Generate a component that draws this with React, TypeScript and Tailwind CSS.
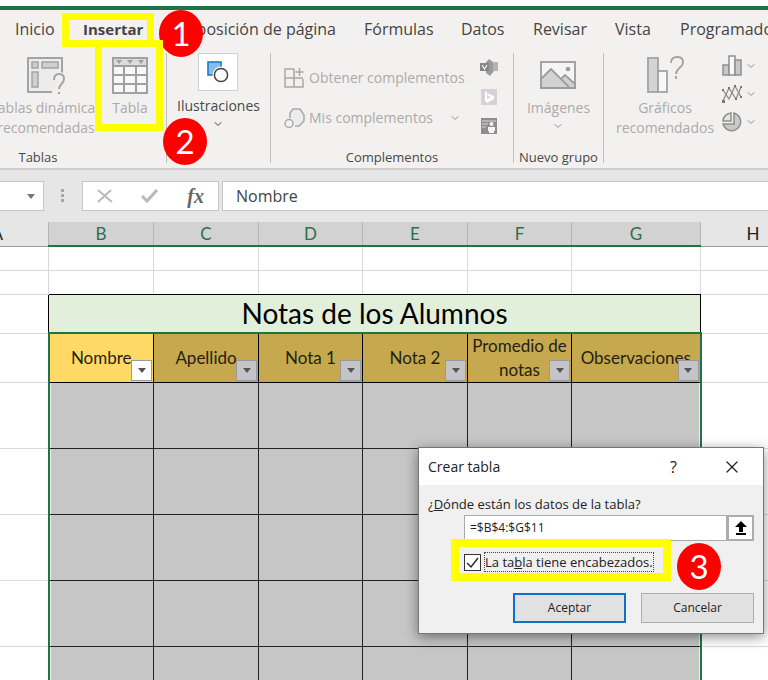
import React, { useState } from 'react';
import { ChevronDown, X } from 'lucide-react';

const tabs = [
  { label: 'Inicio', width: 'w-[68px]' },
  { label: 'Insertar', width: 'w-[86px]', active: true },
  { label: 'Disposición de página', width: 'w-[195px]', alignEnd: true },
  { label: 'Fórmulas', width: 'w-[97px]' },
  { label: 'Datos', width: 'w-[72px]' },
  { label: 'Revisar', width: 'w-[82px]' },
  { label: 'Vista', width: 'w-[65px]' },
  { label: 'Programador', width: 'w-[120px]' },
];

const columns = [
  { letter: 'A', width: 'w-[102px]' },
  { letter: 'B', width: 'w-[105px]', selected: true },
  { letter: 'C', width: 'w-[105px]', selected: true },
  { letter: 'D', width: 'w-[104px]', selected: true },
  { letter: 'E', width: 'w-[105px]', selected: true },
  { letter: 'F', width: 'w-[104px]', selected: true },
  { letter: 'G', width: 'w-[129px]', selected: true },
  { letter: 'H', width: '' },
];

const headers = ['Nombre', 'Apellido', 'Nota 1', 'Nota 2', 'Promedio de notas', 'Observaciones'];

const PivotIcon = () => (
  <svg width="40" height="40" viewBox="0 0 40 40" fill="none" stroke="#a3a3a3" strokeWidth="2">
    <path d="M26 36H2V2h34v16" fill="#ececec" />
    <rect x="6" y="6" width="6" height="6" fill="#d0d0d0" strokeWidth="1.5" />
    <rect x="16" y="6" width="16" height="6" fill="#d0d0d0" strokeWidth="1.5" />
    <rect x="6" y="16" width="6" height="15" fill="#d0d0d0" strokeWidth="1.5" />
    <path d="M28 25c0-4 2-6 5-6s5 2 5 5c0 5-5 5-5 13" stroke="#f3f1f0" strokeWidth="6" />
    <path d="M28 24c0-4 2-6 5-6s5 2 5 5c0 5-5 5-5 10" />
    <path d="M33 36v2" />
  </svg>
);

const TableIcon = () => (
  <svg width="36" height="38" viewBox="0 0 36 38" fill="none" stroke="#a0a0a0" strokeWidth="2">
    <rect x="1" y="1" width="34" height="35" fill="#f7f7f7" />
    <rect x="1" y="1" width="34" height="8" fill="#dcdcdc" stroke="none" />
    <path d="M1 9h34M1 18h34M1 27h34M12 9v27M24 9v27M1 1h34v35H1z" />
    <path d="M4 3h6l-3 4zM15 3h6l-3 4zM26 3h6l-3 4z" fill="#a0a0a0" stroke="none" />
  </svg>
);

const ShapesIcon = () => (
  <svg width="24" height="24" viewBox="0 0 24 24" fill="none">
    <rect x="2" y="2" width="13" height="13" fill="#83beec" stroke="#1e7ac5" strokeWidth="1.6" />
    <circle cx="15" cy="15" r="8.500" fill="#fff" />
    <circle cx="15" cy="15" r="6.600" fill="#fafafa" stroke="#444" strokeWidth="1.5" />
  </svg>
);

const StoreIcon = () => (
  <svg width="20" height="20" viewBox="0 0 20 20" fill="none" stroke="#a8a8a8" strokeWidth="1.5">
    <path d="M10 1H1v18h18v-8M10 1v18M1 10h18M15.500 0v8M11.500 4h8" />
  </svg>
);

const AddinsIcon = () => (
  <svg width="21" height="21" viewBox="0 0 21 21" fill="none" stroke="#a8a8a8" strokeWidth="1.5">
    <path d="M6 10V5l3-4h7l4 6v6l-5 5h-4" fill="#eaecee" />
    <circle cx="5" cy="15.500" r="4" fill="#f3f1f0" />
  </svg>
);

const VisioIcon = () => (
  <svg width="18" height="17" viewBox="0 0 18 17">
    <path d="M9 0l4 3v4l5-3v8h-4l-4 5-4-3V3z" fill="#9b9b9b" />
    <path d="M13 3h5v9h-5z" fill="#b4b4b4" />
    <rect x="0" y="4" width="9" height="8" fill="#858585" />
    <path d="M2 6l2.500 4L7 6" fill="none" stroke="#eee" strokeWidth="1.300" />
  </svg>
);

const BingIcon = () => (
  <svg width="16" height="16" viewBox="0 0 16 16">
    <rect width="16" height="16" fill="#d5d1d5" />
    <path d="M4 2l2 1v7l4-2-3-1-1-3 7 3v3l-7 4-2-2z" fill="#fff" />
  </svg>
);

const PeopleIcon = () => (
  <svg width="16" height="16" viewBox="0 0 16 16">
    <rect width="16" height="16" fill="#8f8b8f" />
    <path d="M1 3h14M1 6h6M1 9h4" stroke="#d8d8d8" strokeWidth="1" />
    <circle cx="10.500" cy="6" r="2" fill="#f5f5f5" />
    <path d="M7 9h7v4h-1v2H8v-2H7z" fill="#f5f5f5" />
  </svg>
);

const ImageIcon = () => (
  <svg width="36" height="28" viewBox="0 0 36 28" fill="none" stroke="#9c9c9c" strokeWidth="1.800">
    <rect x="1" y="1" width="34" height="26" fill="#f5f5f5" />
    <path d="M1 18L11 8l10 10 4-4 10 9v4H1z" fill="#d2d2d2" />
    <path d="M21 18l8 8" />
    <circle cx="28" cy="8" r="2.300" fill="#9c9c9c" stroke="none" />
  </svg>
);

const ChartHelpIcon = () => (
  <svg width="37" height="37" viewBox="0 0 37 37" fill="none" stroke="#a3a3a3" strokeWidth="1.800">
    <rect x="1" y="2" width="10" height="34" fill="#d4d4d4" />
    <rect x="11" y="15" width="9" height="21" fill="#f7f7f7" />
    <path d="M24 7c0-4 2-6 6-6s6 2 6 5c0 6-7 6-7 12M29 20v3" />
  </svg>
);

const BarsIcon = () => (
  <svg width="20" height="21" viewBox="0 0 20 21" stroke="#8e8e8e" strokeWidth="1.500">
    <rect x="1" y="10" width="6" height="10" fill="#c9c9c9" />
    <rect x="7" y="1" width="6" height="19" fill="#f8f8f8" />
    <rect x="13" y="5" width="6" height="15" fill="#c9c9c9" />
  </svg>
);

const LinesIcon = () => (
  <svg width="20" height="20" viewBox="0 0 20 20" fill="none" stroke="#8e8e8e" strokeWidth="1.300">
    <path d="M1 17L7 4l7 11 5-12" />
    <path d="M1 6l6 9 6-13 6 11" />
    <path d="M0 16h3v3H0zM6 3h2v2H6zM13 14h2v2h-2zM18 2h2v2h-2zM0 5h2v2H0zM12 1h2v2h-2zM18 12h2v2h-2z" fill="#777" stroke="none" />
  </svg>
);

const PieIcon = () => (
  <svg width="20" height="20" viewBox="0 0 20 20" fill="#c9c9c9" stroke="#8e8e8e" strokeWidth="1.500">
    <path d="M12 1a9 9 0 1 1-11 11h11z" />
    <path d="M9 1v8H1a9 8 0 0 1 8-8z" fill="#e4e4e4" />
  </svg>
);

interface GroupProps {
  label: string;
  className: string;
  children: React.ReactNode;
}

const Group: React.FC<GroupProps> = ({ label, className, children }) => (
  <section className={`flex h-[110px] shrink-0 flex-col border-r border-[#c3c1c0] ${className}`}>
    <div className="flex h-[99px] justify-center">{children}</div>
    <p className="text-center text-[13px] leading-[12px] whitespace-nowrap text-[#484848]">{label}</p>
  </section>
);

const Badge: React.FC<{ n: number; className: string }> = ({ n, className }) => (
  <span
    className={`absolute flex h-[47px] w-[44px] items-center justify-center rounded-[50%] bg-[#fd0000] font-['Lato','Liberation_Sans',sans-serif] text-[33px] leading-none text-white ${className}`}
  >
    {n}
  </span>
);

const App: React.FC = () => {
  const [range, setRange] = useState('=$B$4:$G$11');
  const [hasHeaders, setHasHeaders] = useState(true);

  return (
    <div className="relative flex h-screen flex-col overflow-hidden bg-white font-['Open_Sans','Noto_Sans',sans-serif] text-[#444]">
      {/* Ribbon */}
      <header className="shrink-0 border-b-2 border-[#cfcdcc] bg-[#f3f1f0]">
        <div className="h-[10px] border-b-4 border-[#217346] bg-white"></div>
        <nav className="flex h-[43px] overflow-hidden pl-[15px]">
          {tabs.map((tab) => (
            <button
              key={tab.label}
              className={`flex h-[38px] shrink-0 items-center whitespace-nowrap ${tab.width} ${tab.active ? 'text-[15px] font-bold' : 'text-[16px]'} ${tab.alignEnd ? 'justify-end pr-[28px]' : ''}`}
            >
              {tab.label}
            </button>
          ))}
        </nav>

        <div className="flex h-[115px] overflow-hidden text-[#acaaaa]">
          <Group label="Tablas" className="-ml-[90px] w-[257px]">
            <div className="flex w-full justify-end pr-[8px]">
              <button className="flex w-[112px] flex-col items-center text-[14px] leading-[20px]">
                <span className="flex h-[45px] items-start pt-[3px]"><PivotIcon /></span>
                <span className="whitespace-nowrap">Tablas dinámicas</span>
                <span>recomendadas</span>
              </button>
              <button className="flex w-[56px] flex-col items-center text-[14px] leading-[20px]">
                <span className="flex h-[45px] items-start pt-[4px]"><TableIcon /></span>
                Tabla
              </button>
            </div>
          </Group>

          <Group label="" className="w-[104px]">
            <button className="flex flex-col items-center text-[14px] leading-[20px] text-[#484848]">
              <span className="mb-[5px] flex h-[38px] w-[40px] items-center justify-center border border-[#d0d0d0] bg-white">
                <ShapesIcon />
              </span>
              Ilustraciones
              <ChevronDown size={12} className="mt-[2px]" />
            </button>
          </Group>

          <Group label="Complementos" className="w-[243px]">
            <div className="flex w-full justify-between pr-[15px] pl-[13px]">
              <div className="flex flex-col gap-[16px] pt-[13px] text-[14px] leading-[24px] whitespace-nowrap">
                <button className="flex items-center gap-[5px]">
                  <StoreIcon />
                  Obtener complementos
                </button>
                <button className="flex items-center gap-[4px]">
                  <AddinsIcon />
                  Mis complementos
                  <ChevronDown size={12} className="ml-[12px] text-[#8e8e8e]" />
                </button>
              </div>
              <div className="flex flex-col items-center gap-[13px] pt-[6px]">
                <button aria-label="Visio"><VisioIcon /></button>
                <button aria-label="Bing"><BingIcon /></button>
                <button aria-label="Personas"><PeopleIcon /></button>
              </div>
            </div>
          </Group>

          <Group label="Nuevo grupo" className="w-[90px]">
            <button className="flex flex-col items-center text-[14px] leading-[20px]">
              <span className="flex h-[45px] items-start pt-[8px]"><ImageIcon /></span>
              Imágenes
              <ChevronDown size={12} className="mt-[2px] text-[#8e8e8e]" />
            </button>
          </Group>

          <Group label="Gráficos" className="w-[380px]">
            <div className="flex w-full pl-[10px]">
              <button className="flex w-[102px] flex-col items-center text-[14px] leading-[20px]">
                <span className="flex h-[45px] items-start pt-[3px]"><ChartHelpIcon /></span>
                <span>Gráficos</span>
                <span>recomendados</span>
              </button>
              <div className="ml-[6px] flex flex-col gap-[8px] pt-[2px] text-[#8e8e8e]">
                <button aria-label="Columnas" className="flex items-center gap-[3px]"><BarsIcon /><ChevronDown size={12} /></button>
                <button aria-label="Líneas" className="flex items-center gap-[3px]"><LinesIcon /><ChevronDown size={12} /></button>
                <button aria-label="Circular" className="flex items-center gap-[3px]"><PieIcon /><ChevronDown size={12} /></button>
              </div>
            </div>
          </Group>
        </div>
      </header>

      {/* Formula bar */}
      <div className="flex h-[52px] shrink-0 bg-[#e6e6e6] pt-[11px]">
        <button aria-label="Cuadro de nombres" className="flex h-[30px] w-[44px] items-center justify-end border border-l-0 border-[#c6c6c6] bg-white pr-[8px]">
          <svg width="8" height="5" viewBox="0 0 8 5"><path d="M0 0h8L4 5z" fill="#777" /></svg>
        </button>
        <div className="flex h-[30px] w-[38px] items-center justify-center">
          <svg width="4" height="14" viewBox="0 0 4 14" fill="#a6a6a6"><path d="M0 0h3v3H0zM0 5h3v3H0zM0 10h3v3H0z" /></svg>
        </div>
        <div className="flex h-[30px] w-[137px] items-center justify-between border border-[#c6c6c6] bg-white px-[14px]">
          <button aria-label="Cancelar entrada">
            <svg width="16" height="14" viewBox="0 0 16 14" stroke="#b9b9b9" strokeWidth="2"><path d="M1 1l14 12M14 1L1 13" /></svg>
          </button>
          <button aria-label="Introducir">
            <svg width="18" height="14" viewBox="0 0 18 14" fill="none" stroke="#b9b9b9" strokeWidth="3"><path d="M1 7l5 5L16 1" /></svg>
          </button>
          <button className="font-['Liberation_Serif',serif] text-[20px] leading-[24px] font-bold text-[#666] italic">fx</button>
        </div>
        <input
          aria-label="Barra de fórmulas"
          defaultValue="Nombre"
          className="ml-[3px] h-[30px] min-w-0 flex-1 border border-r-0 border-[#c6c6c6] bg-white px-[13px] text-[16px] outline-none"
        />
      </div>

      {/* Sheet */}
      <main className="min-h-0 flex-1 overflow-hidden font-['Lato','Liberation_Sans',sans-serif]">
        <table className="-ml-[54px] w-[calc(100%+92px)] table-fixed border-collapse">
          <colgroup>
            {columns.map((c) => <col key={c.letter} className={c.width} />)}
          </colgroup>
          <thead>
            <tr className="h-[24px]">
              {columns.map((c) => (
                <th
                  key={c.letter}
                  scope="col"
                  className={`border-r p-0 text-[17px] leading-[20px] font-normal ${c.selected ? 'border-r-[#b5b5b5] border-b-2 border-b-[#217346] bg-[#d2d2d2] text-[#2d6e4c]' : 'border-r-[#b5b5b5] border-b border-b-[#9b9b9b] bg-[#e6e6e6] text-[#222]'}`}
                >
                  {c.letter}
                </th>
              ))}
            </tr>
          </thead>
          <tbody>
            {[0, 1].map((row) => (
              <tr key={row} className="h-[24px]">
                {columns.map((c) => (
                  <td
                    key={c.letter}
                    className={`border border-[#d9d9d9] ${row === 1 && c.selected ? 'border-b-black' : ''}`}
                  ></td>
                ))}
              </tr>
            ))}
            <tr className="h-[39px]">
              <td className="border-y border-[#d9d9d9]"></td>
              <td colSpan={6} className="border border-black bg-[#e2efda] p-0 text-center text-[28px] leading-[32px] text-black">
                Notas de los Alumnos
              </td>
              <td className="border-y border-[#d9d9d9]"></td>
            </tr>
            <tr className="h-[49px]">
              <td className="border-y border-[#d9d9d9]"></td>
              {headers.map((h, i) => (
                <th
                  key={h}
                  scope="col"
                  className={`relative border border-t-2 border-black border-t-[#217346] p-0 text-[17px] leading-[24px] font-normal text-[#241f10] ${i === 0 ? 'border-l-2 border-l-[#217346] bg-[#ffd966]' : 'bg-[#c6a84f]'} ${i === 5 ? 'border-r-2 border-r-[#217346]' : ''}`}
                >
                  {h}
                  <button
                    aria-label={`Filtrar ${h}`}
                    className={`absolute right-[1px] bottom-[1px] flex h-[21px] w-[21px] items-center justify-center border border-[#999] ${i === 0 ? 'bg-white' : 'bg-[#c4c4c8]'}`}
                  >
                    <svg width="8" height="5" viewBox="0 0 8 5"><path d="M0 0h8L4 5z" fill="#555" /></svg>
                  </button>
                </th>
              ))}
              <td className="border-y border-[#d9d9d9]"></td>
            </tr>
            {[0, 1, 2, 3, 4, 5, 6].map((row) => (
              <tr key={row} className="h-[66px]">
                <td className="border-y border-[#d9d9d9]"></td>
                {headers.map((h, i) => (
                  <td
                    key={h}
                    className={`border border-[#222] bg-[#c6c6c6] ${i === 0 ? 'border-l-2 border-l-[#217346] shadow-[inset_1px_0_0_#eeeeee]' : ''} ${i === 5 ? 'border-r-2 border-r-[#217346] shadow-[inset_-1px_0_0_#eeeeee]' : ''}`}
                  ></td>
                ))}
                <td className="border-y border-[#d9d9d9]"></td>
              </tr>
            ))}
          </tbody>
        </table>
      </main>

      {/* Create table dialog */}
      <div
        role="dialog"
        aria-labelledby="dialog-title"
        className="absolute top-[447px] left-[418px] w-[346px] border border-[#777] bg-[#f0f0f0] pb-[10px] text-[13px] text-[#222] shadow-[0_3px_12px_rgba(0,0,0,0.45)]"
      >
        <div className="flex h-[37px] items-center bg-white pr-[21px] pl-[9px]">
          <h2 id="dialog-title" className="flex-1 text-[14px]">Crear tabla</h2>
          <button aria-label="Ayuda" className="mr-[45px] text-[16px]">?</button>
          <button aria-label="Cerrar"><X size={20} strokeWidth={1.5} /></button>
        </div>
        <div className="px-[9px] pt-[10px]">
          <label htmlFor="range" className="block h-[20px] leading-[18px]">
            ¿<u>D</u>ónde están los datos de la tabla?
          </label>
          <div className="ml-[36px] flex h-[26px]">
            <input
              id="range"
              value={range}
              onChange={(e) => setRange(e.target.value)}
              className="min-w-0 flex-1 border border-[#aaa] bg-white px-[5px] text-[12px] outline-none"
            />
            <button aria-label="Seleccionar rango" className="flex w-[27px] items-center justify-center border-2 border-[#adadad] bg-white">
              <svg width="12" height="14" viewBox="0 0 12 14"><path d="M6 0l6 6H8v5H4V6H0zM1 12h10v2H1z" fill="#000" /></svg>
            </button>
          </div>
          <label className="mt-[11px] ml-[36px] flex h-[20px] items-center gap-[3px]">
            <span className="relative flex h-[17px] w-[17px]">
              <input
                type="checkbox"
                checked={hasHeaders}
                onChange={(e) => setHasHeaders(e.target.checked)}
                className="h-[17px] w-[17px] appearance-none border border-[#333] bg-white"
              />
              {hasHeaders && (
                <svg className="pointer-events-none absolute inset-0" width="17" height="17" viewBox="0 0 17 17" fill="none" stroke="#222" strokeWidth="1.400">
                  <path d="M3 9l4 4 7-9" />
                </svg>
              )}
            </span>
            <span className="border border-dotted border-[#444] leading-[18px] whitespace-nowrap">
              La ta<u>b</u>la tiene encabezados.
            </span>
          </label>
          <div className="mt-[21px] flex justify-end gap-[15px] text-[12px]">
            <button className="h-[30px] w-[113px] border-2 border-[#0f6fc9] bg-[#e1e1e1]">Aceptar</button>
            <button className="h-[30px] w-[113px] border border-[#adadad] bg-[#e1e1e1]">Cancelar</button>
          </div>
        </div>
      </div>

      {/* Step highlights */}
      <div className="pointer-events-none absolute top-[539px] left-[451px] h-[42px] w-[220px] border-8 border-[#ffff00]"></div>
      <Badge n={1} className="top-[10px] left-[159px]" />
      <div className="pointer-events-none absolute top-[40px] left-[95px] h-[91px] w-[68px] border-[7px] border-[#ffff00]"></div>
      <div className="pointer-events-none absolute top-[13px] left-[62px] h-[34px] w-[92px] border-[7px] border-[#ffff00]"></div>
      <Badge n={2} className="top-[118px] left-[163px]" />
      <Badge n={3} className="top-[543px] left-[677px]" />
    </div>
  );
};

export default App;
